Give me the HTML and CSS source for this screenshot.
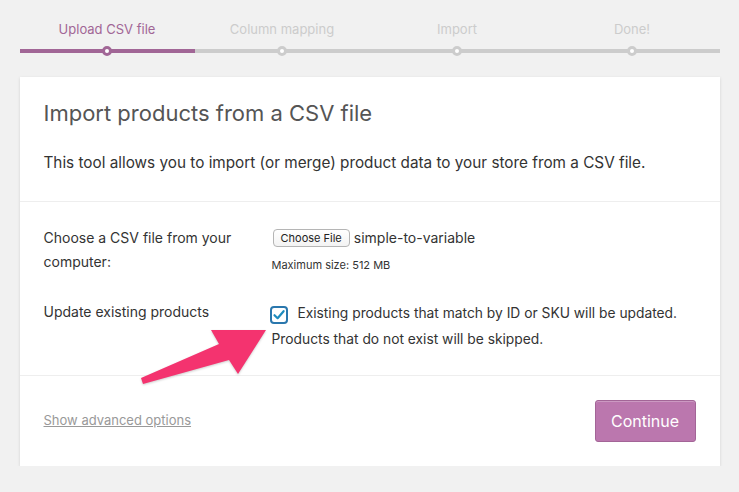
FILE: index.html
```html
<!DOCTYPE html>
<html lang="en">
<head>
    <meta charset="UTF-8">
    <title>Product Import</title>
    <link rel="stylesheet" href="styles.css">
</head>
<body>
    <ol class="steps">
        <li class="step active">Upload CSV file</li>
        <li class="step">Column mapping</li>
        <li class="step">Import</li>
        <li class="step">Done!</li>
    </ol>

    <div class="card">
        <header class="card-header">
            <h2>Import products from a CSV file</h2>
            <p>This tool allows you to import (or merge) product data to your store from a CSV file.</p>
        </header>

        <section class="card-body">
            <div class="row">
                <div class="label">Choose a CSV file from your computer:</div>
                <div class="value">
                    <div class="file-line">
                        <button class="file-btn" type="button">Choose File</button>
                        <span class="file-name">simple-to-variable</span>
                    </div>
                    <small class="hint">Maximum size: 512 MB</small>
                </div>
            </div>
            <div class="row">
                <div class="label">Update existing products</div>
                <div class="value check-text">
                    <span class="checkbox">
                        <svg width="14" height="14" viewBox="0 0 14 14"><path d="M2.5 7.2 L5.6 10.2 L11.6 3.2" fill="none" stroke="#1e8cbe" stroke-width="2.2" stroke-linecap="round" stroke-linejoin="round"/></svg>
                    </span>
                    Existing products that match by ID or SKU will be updated. Products that do not exist will be skipped.
                </div>
            </div>
        </section>

        <footer class="card-footer">
            <a href="#" class="advanced">Show advanced options</a>
            <button class="continue" type="button">Continue</button>
        </footer>

        <svg class="arrow" width="140" height="70" viewBox="130 320 140 70">
            <polygon points="140,378 218,344 210,330 265,330 237,374 228,360 142,384" fill="#f4336f"/>
        </svg>
    </div>
</body>
</html>
```

FILE: styles.css
```css
body {
    margin: 0;
    background: #f1f1f1;
    font-family: Inter, "Liberation Sans", Arial, sans-serif;
    color: #333;
}

.steps {
    list-style: none;
    display: flex;
    width: 700px;
    margin: 0 auto;
    padding: 20px 0 0;
}

.step {
    flex: 1;
    position: relative;
    text-align: center;
    font-size: 13px;
    line-height: 18px;
    color: #ccc;
    padding-bottom: 11px;
    border-bottom: 4px solid #ccc;
}

.step::before {
    content: "";
    position: absolute;
    left: 50%;
    bottom: -7px;
    margin-left: -5px;
    width: 4px;
    height: 4px;
    border: 3px solid #ccc;
    border-radius: 50%;
    background: #fff;
}

.step.active {
    color: #a16696;
    border-color: #a16696;
}

.step.active::before {
    border-color: #a16696;
}

.card {
    position: relative;
    width: 700px;
    margin: 24px auto 0;
    background: #fff;
    box-shadow: 0 1px 3px rgba(0, 0, 0, 0.13);
}

.card-header {
    padding: 22px 24px 26px;
    border-bottom: 1px solid #eee;
}

.card-header h2 {
    margin: 0;
    font-size: 22px;
    font-weight: normal;
    line-height: 28px;
    color: #555;
}

.card-header p {
    margin: 24px 0 0;
    font-size: 15.3px;
    line-height: 24px;
}

.card-body {
    padding: 24px 24px 23px;
    border-bottom: 1px solid #eee;
}

.row {
    display: flex;
    font-size: 14px;
    line-height: 24px;
}

.row + .row {
    margin-top: 26px;
}

.label {
    width: 228px;
    flex: none;
    padding-right: 20px;
    box-sizing: border-box;
}

.value {
    flex: 1;
}

.file-line {
    display: flex;
    align-items: center;
    gap: 4px;
}

.file-btn {
    font-family: Inter, "Liberation Sans", Arial, sans-serif;
    font-size: 11px;
    height: 18px;
    padding: 0 7px;
    margin-left: 1px;
    background: linear-gradient(#fff, #f3f3f3);
    border: 1px solid #b5b5b5;
    border-radius: 4px;
    color: #222;
}

.file-name {
    font-size: 14px;
}

.hint {
    display: block;
    font-size: 11px;
    line-height: 16px;
    margin-top: 7px;
}

.check-text {
    font-size: 13.8px;
    line-height: 26px;
}

.checkbox {
    display: inline-flex;
    align-items: center;
    justify-content: center;
    width: 14px;
    height: 14px;
    border: 2px solid #2a77ad;
    border-radius: 4px;
    vertical-align: -4px;
    margin: 0 6px 0 -2px;
}

.card-footer {
    display: flex;
    justify-content: space-between;
    align-items: center;
    padding: 24px;
}

.advanced {
    font-size: 13px;
    color: #999;
    text-decoration: underline;
    margin-top: -3px;
}

.continue {
    font-family: Inter, "Liberation Sans", Arial, sans-serif;
    font-size: 16px;
    color: #fff;
    background: #bb77ae;
    border: 1px solid #a36597;
    border-radius: 3px;
    width: 101px;
    height: 42px;
    box-shadow: inset 0 1px 0 rgba(255, 255, 255, 0.25);
}

.arrow {
    position: absolute;
    left: 111px;
    top: 243px;
    filter: drop-shadow(0 1px 1px rgba(0, 0, 0, 0.2));
}
```
